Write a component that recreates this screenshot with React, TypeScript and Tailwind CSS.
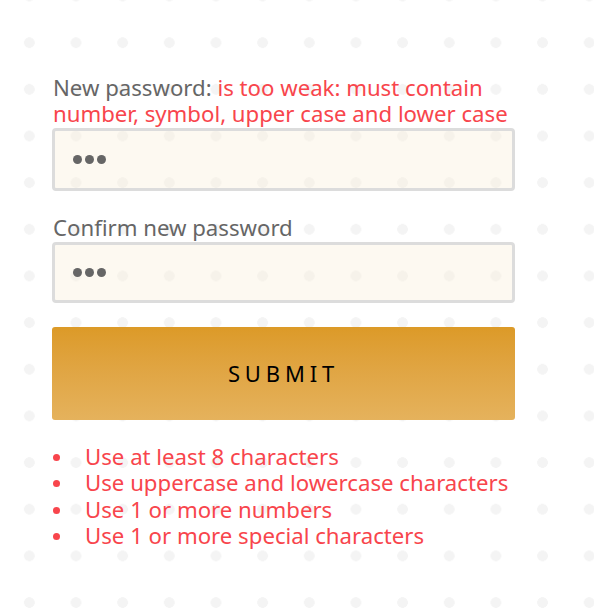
import React from "react";

const dotsBg =
  "bg-white bg-[radial-gradient(circle,#f4f4f4_5px,transparent_5.5px)] bg-[length:46.667px_46.667px] bg-[position:6px_19.33px]";

function PwInput({ tall }: { tall?: boolean }) {
  return (
    <div
      className={`${tall ? "h-[63px]" : "h-[61px]"} w-full rounded-[4px] border-[3px] border-[#dcdcdc] bg-[#fbefdc]/40 flex items-center pl-[18px]`}
    >
      <div className="flex gap-[3px]">
        <span className="block w-[9px] h-[9px] rounded-full bg-[#666]" />
        <span className="block w-[9px] h-[9px] rounded-full bg-[#666]" />
        <span className="block w-[9px] h-[9px] rounded-full bg-[#666]" />
      </div>
    </div>
  );
}

export default function App() {
  return (
    <div
      className={`${dotsBg} w-full min-h-screen h-[612px] overflow-hidden`}
      style={{ fontFamily: '"Noto Sans", "Open Sans", sans-serif' }}
    >
      <div className="pl-[52px] pt-[75px] w-[515px] flex flex-col text-[22.2px]">
        <div className="leading-[26px] text-[#666] pl-px">
          New password:{" "}
          <span className="text-[#f8454c]">
            is too weak: must contain number, symbol, upper case and lower case
          </span>
        </div>
        <div className="mt-px">
          <PwInput tall />
        </div>
        <div className="mt-[24px] leading-[26px] text-[#666] pl-px">Confirm new password</div>
        <div className="mt-px">
          <PwInput />
        </div>
        <button className="mt-[24px] h-[93px] w-full rounded-[3px] bg-gradient-to-b from-[#dc9a27] to-[#e5b25c] text-black text-[22px] tracking-[0.22em]">
          SUBMIT
        </button>
        <ul className="mt-[24px] text-[#f8454c] leading-[26.4px]">
          {[
            "Use at least 8 characters",
            "Use uppercase and lowercase characters",
            "Use 1 or more numbers",
            "Use 1 or more special characters",
          ].map((t) => (
            <li key={t} className="flex items-center">
              <span className="block w-[7px] h-[7px] rounded-full bg-[#f8454c] ml-px mr-[25px]" />
              <span>{t}</span>
            </li>
          ))}
        </ul>
      </div>
    </div>
  );
}
